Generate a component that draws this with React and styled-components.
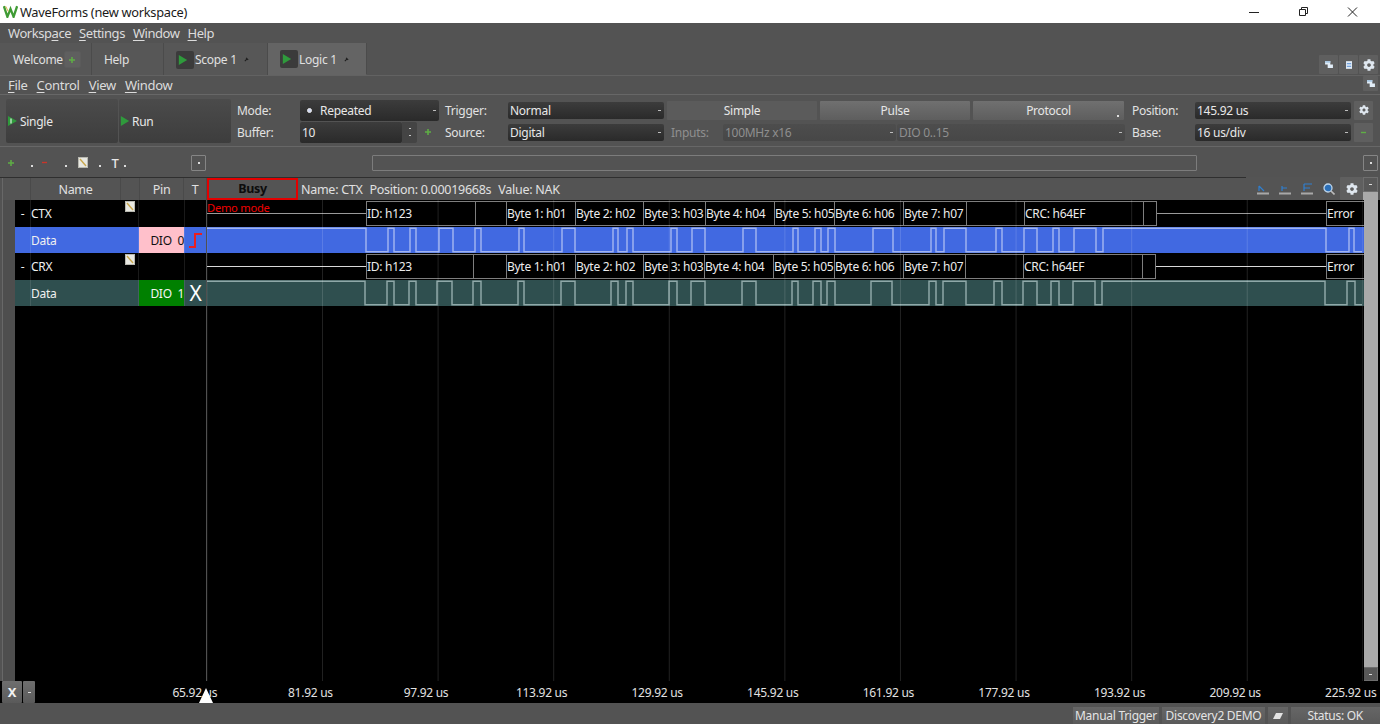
import React from 'react'
import styled, { createGlobalStyle } from 'styled-components'
import { FaCog } from 'react-icons/fa'

const GlobalStyle = createGlobalStyle`
  html, body { margin: 0; padding: 0; background: #535353; }
  * { box-sizing: border-box; }
  body { font-family: "Noto Sans", "Open Sans", sans-serif; }
`

const TRACE_X = 206
const ctxEdges = [366,388,394,410,416,439,453,475,481,519,524,562,575,613,618,627,633,671,677,692,705,743,756,793,798,815,821,828,835,873,893,931,936,944,966,996,1002,1024,1037,1053,1059,1074,1096,1103,1326,1349,1354]
const crxEdges = [365,387,394,409,416,437,452,473,481,518,524,561,575,611,618,626,633,669,677,691,705,742,756,792,798,813,821,827,835,871,892,929,936,943,966,994,1002,1023,1037,1051,1059,1073,1095,1102,1325,1347,1355]

const ctxBus = [[366,'ID: h123'],[475,''],[506,'Byte 1: h01'],[575,'Byte 2: h02'],[643,'Byte 3: h03'],[705,'Byte 4: h04'],[774,'Byte 5: h05'],[834,'Byte 6: h06'],[903,'Byte 7: h07'],[966,''],[1024,'CRC: h64EF'],[1143,''],[1157,null],[1326,'Error'],[1364,null]]
const crxBus = [[366,'ID: h123'],[473,''],[506,'Byte 1: h01'],[575,'Byte 2: h02'],[643,'Byte 3: h03'],[704,'Byte 4: h04'],[773,'Byte 5: h05'],[834,'Byte 6: h06'],[903,'Byte 7: h07'],[965,''],[1023,'CRC: h64EF'],[1142,''],[1156,null],[1326,'Error'],[1364,null]]

const axisLabels = ['65.92 us','81.92 us','97.92 us','113.92 us','129.92 us','145.92 us','161.92 us','177.92 us','193.92 us','209.92 us','225.92 us']

const Page = styled.div`
  width: 1380px;
  height: 724px;
  display: flex;
  flex-direction: column;
  overflow: hidden;
  background: #535353;
  color: #e4e4e4;
  font-size: 12px;
  letter-spacing: -.28px;
`

const TitleBar = styled.div`
  height: 23px;
  flex: none;
  background: #fff;
  color: #1a1a1a;
  display: flex;
  align-items: center;
  padding-left: 3px;
  font-size: 12.8px;
  svg.logo { margin-right: 2px; }
`
const WinButtons = styled.div`
  margin-left: auto;
  display: flex;
  svg { display: block; width: 49px; height: 12px; }
  padding-right: 3px;
`

const MenuBar = styled.div`
  height: ${p => p.$h}px;
  flex: none;
  display: flex;
  align-items: center;
  gap: ${p => p.$gap}px;
  padding-left: 8px;
  font-size: 13px;
  letter-spacing: ${p => p.$track}px;
  color: #dcdcdc;
  border-bottom: ${p => p.$line ? '1px solid #676767' : 'none'};
  position: relative;
  u { text-underline-offset: 2px; }
`

const TabBar = styled.div`
  height: 33px;
  flex: none;
  display: flex;
  border-bottom: 1px solid #626262;
`
const Tab = styled.div`
  width: ${p => p.$w}px;
  display: flex;
  align-items: center;
  padding-left: ${p => p.$pad}px;
  padding-top: 1px;
  gap: 1px;
  background: ${p => p.$active ? '#646464' : '#575757'};
  border-right: 1px solid #4b4b4b;
  font-size: 12px;
  color: #e0e0e0;
  border-bottom: ${p => p.$active ? '1px solid #646464' : 'none'};
`
const PlayBox = styled.span`
  width: 18px;
  height: 18px;
  background: #3b3b3b;
  border-radius: 2px;
  display: inline-flex;
  align-items: center;
  padding-left: 2px;
`
const PlusBox = styled.span`
  width: 17px;
  height: 17px;
  background: #5f5f5f;
  border: 1px solid #5b5b5b;
  border-radius: 2px;
  display: inline-flex;
  align-items: center;
  justify-content: center;
`
const PinMark = styled.svg`
  width: 5px;
  height: 5px;
  margin-left: 6px;
`
const TabTools = styled.div`
  margin-left: auto;
  align-self: flex-end;
  display: flex;
  gap: 1px;
  margin-right: 2px;
  margin-bottom: 1px;
`
const TinyBtn = styled.div`
  width: ${p => p.$w || 19}px;
  height: ${p => p.$h || 19}px;
  background: #5f5f5f;
  border-radius: 1px;
  display: flex;
  align-items: center;
  justify-content: center;
  color: #dfe7ef;
  flex: none;
`
const MenuCorner = styled(TinyBtn)`
  position: absolute;
  right: 2px;
  top: 0;
`

const ControlBar = styled.div`
  height: 52px;
  flex: none;
  display: flex;
  padding: 4px 0 0 6px;
  border-bottom: 1px solid #676767;
`
const RunButton = styled.div`
  width: 112px;
  height: 44px;
  margin-right: 1px;
  border-radius: 2px;
  background: linear-gradient(#4b4b4b, #3d3d3d);
  display: flex;
  align-items: center;
  gap: 2px;
  padding-left: 1px;
  font-size: 12px;
  color: #e8e8e8;
`
const Block = styled.div`
  width: ${p => p.$w}px;
  margin-left: ${p => p.$ml}px;
  flex: none;
  display: flex;
  flex-direction: column;
`
const FieldRow = styled.div`
  height: 22px;
  display: flex;
  align-items: center;
  gap: ${p => p.$gap || 0}px;
`
const Label = styled.div`
  width: ${p => p.$w || 63}px;
  flex: none;
  font-size: 12px;
  padding-left: ${p => p.$pad || 0}px;
  color: ${p => p.$off ? '#8f8f8f' : '#e2e2e2'};
`
const Field = styled.div`
  width: ${p => p.$w}px;
  height: ${p => p.$h || 17}px;
  flex: none;
  position: relative;
  display: flex;
  align-items: center;
  padding-left: ${p => p.$pad || 2}px;
  margin-left: ${p => p.$ml || 0}px;
  border-radius: 2px;
  font-size: 12px;
  white-space: nowrap;
  color: ${p => p.$off ? '#8f8f8f' : '#e8e8e8'};
  background: ${p => p.$off ? 'linear-gradient(#4d4d4d, #474747)' : 'linear-gradient(#3c3c3c, #2a2a2a)'};
  &::after {
    content: "";
    display: ${p => p.$plain ? 'none' : 'block'};
    position: absolute;
    right: 3px;
    top: 50%;
    width: 3px;
    height: 1px;
    background: #bdbdbd;
  }
`
const Dot = styled.span`
  width: 5px;
  height: 5px;
  border-radius: 50%;
  background: #cfd8f5;
  border: 1px solid #e8e8e8;
  margin: 0 8px 0 6px;
`
const Spin = styled.div`
  width: 15px;
  height: 21px;
  flex: none;
  background: #444;
  border-radius: 0 2px 2px 0;
  display: flex;
  flex-direction: column;
  align-items: center;
  justify-content: space-around;
  padding: 3px 0;
  i { display: block; width: 2px; height: 1px; background: #c8c8c8; }
`
const TrigTab = styled.div`
  width: ${p => p.$w}px;
  height: 19px;
  flex: none;
  display: flex;
  align-items: center;
  justify-content: center;
  font-size: 12px;
  position: relative;
  color: #e6e6e6;
  border-radius: 1px;
  background: ${p => p.$on ? 'linear-gradient(#707070, #5e5e5e)' : '#5b5b5b'};
`
const Caret = styled.span`
  position: absolute;
  right: 5px;
  bottom: 3px;
  width: 2px;
  height: 2px;
  background: #e0e0e0;
`
const SideBtn = styled(TinyBtn)`
  margin-left: 3px;
`

const ToolRow = styled.div`
  height: 30px;
  flex: none;
  display: flex;
  align-items: center;
  padding-top: 1px;
`
const Tool = styled.div`
  width: ${p => p.$w}px;
  margin-left: ${p => p.$ml}px;
  flex: none;
  display: flex;
  align-items: center;
  justify-content: center;
  font-size: 13px;
  font-weight: 500;
  color: #e8e8e8;
`
const TinyDot = styled.span`
  width: 2px;
  height: 2px;
  background: #ddd;
  margin-top: 6px;
`
const FrameBtn = styled.div`
  width: 15px;
  height: 16px;
  margin-left: ${p => p.$ml}px;
  flex: none;
  border: 1px solid #858585;
  border-radius: 1px;
  display: flex;
  align-items: center;
  justify-content: center;
  i { display: block; width: 2px; height: 2px; background: #ddd; }
`
const ScrollSlot = styled.div`
  width: 825px;
  height: 16px;
  margin-left: 166px;
  flex: none;
  border: 1px solid #7c7c7c;
  border-radius: 1px;
`

const Panel = styled.div`
  height: 504px;
  flex: none;
  display: flex;
  padding-left: 2px;
  position: relative;
  &::before {
    content: "";
    position: absolute;
    left: 0;
    top: 0;
    width: 1246px;
    height: 1px;
    background: #2f2f2f;
  }
`
const Table = styled.div`
  width: 1361px;
  flex: none;
  display: flex;
  flex-direction: column;
`
const HeaderRow = styled.div`
  height: 23px;
  flex: none;
  display: flex;
  align-items: center;
  background: #545454;
  font-size: 12.5px;
  color: #e0e0e0;
  border-left: 1px solid #686868;
`
const HeadCell = styled.div`
  width: ${p => p.$w}px;
  height: 100%;
  flex: none;
  display: flex;
  align-items: center;
  justify-content: center;
  padding-top: 1px;
  border-right: 1px solid #4a4a4a;
`
const BusyBox = styled.div`
  width: 91px;
  height: 22px;
  flex: none;
  border: 2px solid #e40000;
  display: flex;
  align-items: center;
  justify-content: center;
  color: #0c0c0c;
  font-weight: 700;
  font-size: 12.5px;
`
const Info = styled.div`
  margin-left: 3px;
  padding-top: 1px;
  display: flex;
  gap: 7px;
  white-space: nowrap;
`
const HeadTools = styled.div`
  margin-left: auto;
  display: flex;
  align-items: center;
  gap: 10px;
  height: 100%;
`
const GearBtn = styled(TinyBtn)`
  margin-left: -5px;
  width: 23px;
  height: 23px;
`

const Body = styled.div`
  flex: 1;
  display: flex;
  min-height: 0;
`
const Gutter = styled.div`
  width: 13px;
  flex: none;
  background: #4e4e4e;
  border-left: 1px solid #686868;
`
const Scope = styled.div`
  flex: 1;
  background: #000;
  position: relative;
`
const GridLines = styled.div`
  position: absolute;
  left: ${TRACE_X - 15}px;
  top: 0;
  bottom: 0;
  width: 1157px;
  pointer-events: none;
  border-left: 1px solid #505050;
  background-image: linear-gradient(to right, rgba(255,255,255,.13) 1px, transparent 1px);
  background-size: 115.6px 100%;
  background-position: 115px 0;
`
const Row = styled.div`
  height: ${p => p.$h}px;
  display: flex;
  background: ${p => p.$bg};
  color: #f0f0f0;
`
const NameCell = styled.div`
  width: 124px;
  flex: none;
  display: flex;
  align-items: center;
  position: relative;
  border-right: 1px solid rgba(255,255,255,.1);
  font-size: 12px;
`
const Dash = styled.span`
  width: 15px;
  flex: none;
  text-align: center;
`
const NameText = styled.span`
  flex: 1;
  height: 100%;
  display: flex;
  align-items: center;
  border-left: 1px solid rgba(255,255,255,.1);
`
const NoteIcon = styled.svg`
  position: absolute;
  left: 110px;
  top: 1px;
  width: 10px;
  height: 11px;
`
const PinCell = styled.div`
  width: 45px;
  flex: none;
  background: ${p => p.$bg || 'transparent'};
  color: ${p => p.$fg || '#fff'};
  display: flex;
  align-items: center;
  justify-content: flex-end;
  white-space: pre;
  font-size: 12px;
`
const TrigCell = styled.div`
  width: 22px;
  flex: none;
  display: flex;
  align-items: center;
  justify-content: center;
  font-size: 21px;
  color: #fff;
  border-left: 1px solid rgba(255,255,255,.1);
  svg { margin-left: 1px; }
`
const Trace = styled.div`
  flex: 1;
  min-width: 0;
  position: relative;
  overflow: hidden;
  padding-top: ${p => p.$top}px;
`
const BusLane = styled.div`
  height: 25px;
  display: flex;
`
const BusLine = styled.div`
  flex: none;
  position: relative;
  &::after {
    content: "";
    position: absolute;
    left: 0;
    right: 0;
    top: 12px;
    height: 1px;
    background: ${p => p.$c};
  }
`
const BusSeg = styled.div`
  flex: none;
  border: 1px solid #7e7e7e;
  border-right: none;
  display: flex;
  align-items: center;
  white-space: nowrap;
  overflow: hidden;
  font-size: 12px;
  color: #ececec;
  &:nth-last-child(3) { border-right: 1px solid #7e7e7e; }
`
const DemoMark = styled.div`
  position: absolute;
  left: 1px;
  top: 1px;
  color: #f00000;
  font-size: 11.2px;
  line-height: 13px;
  white-space: nowrap;
`
const WaveSvg = styled.svg`
  display: block;
  width: 1156px;
  height: 26px;
`

const ScrollCol = styled.div`
  width: 17px;
  flex: none;
  padding-right: 2px;
  display: flex;
  flex-direction: column;
  background: linear-gradient(#545454 0, #545454 23px, #000 23px);
`
const ScrollEnd = styled.div`
  height: ${p => p.$h}px;
  flex: none;
  background: #585858;
  border: 1px solid #6e6e6e;
  display: flex;
  align-items: center;
  justify-content: center;
  i { display: block; width: 3px; height: 1px; background: #ddd; }
`
const ScrollThumb = styled.div`
  flex: 1;
  background: #a9a9a9;
`

const Axis = styled.div`
  height: 22px;
  flex: none;
  background: #000;
  display: flex;
  position: relative;
`
const AxisBtns = styled.div`
  width: 137px;
  flex: none;
  display: flex;
  gap: 1px;
  padding-left: 2px;
`
const AxisBtn = styled.div`
  width: ${p => p.$w}px;
  height: 22px;
  background: linear-gradient(#6e6e6e, #5a5a5a);
  border-radius: 1px;
  display: flex;
  align-items: center;
  justify-content: center;
  color: #f2f2f2;
  font-weight: 700;
  font-size: 13px;
  i { display: block; width: 3px; height: 1px; background: #ddd; }
`
const AxisLabels = styled.div`
  display: grid;
  grid-template-columns: repeat(11, 115.6px);
  align-items: center;
  flex: none;
`
const AxisLabel = styled.div`
  text-align: center;
  font-size: 12px;
  color: #e2e2e2;
  white-space: nowrap;
`
const Marker = styled.div`
  position: absolute;
  left: 199px;
  bottom: 0;
  width: 0;
  height: 0;
  border-left: 7px solid transparent;
  border-right: 7px solid transparent;
  border-bottom: 15px solid #fff;
`

const StatusBar = styled.div`
  flex: 1;
  display: flex;
  justify-content: flex-end;
  align-items: flex-end;
  gap: 3px;
`
const StatusBtn = styled.div`
  width: ${p => p.$w}px;
  height: 17px;
  flex: none;
  background: linear-gradient(#666, #5a5a5a);
  display: flex;
  align-items: center;
  justify-content: ${p => p.$end ? 'flex-end' : 'center'};
  padding-right: ${p => p.$end ? 17 : 0}px;
  font-size: 12px;
  color: #e4e4e4;
  white-space: nowrap;
`

const Play = ({ w = 10, h = 12, c = '#2f9a3c' }) => (
  <svg width={w} height={h} viewBox="0 0 12 14"><path d="M1 1l10 6-10 6z" fill={c} /></svg>
)
const Plus = ({ c = '#5fae45' }) => (
  <svg width="6" height="6" viewBox="0 0 7 7"><path d="M3.5 0v7M0 3.5h7" stroke={c} strokeWidth="1.8" /></svg>
)
const Minus = ({ c = '#5fae45', w = 5 }) => (
  <svg width={w} height="3" viewBox={`0 0 ${w} 3`}><path d={`M0 1.5h${w}`} stroke={c} strokeWidth="1.4" /></svg>
)
const Pin = () => (
  <PinMark viewBox="0 0 6 6"><path d="M1 5l3-3M2.5 1l2.5 2.5" stroke="#1c1c1c" strokeWidth="1.3" /></PinMark>
)
const WinTile = () => (
  <svg width="8" height="7" viewBox="0 0 9 8"><path d="M0 0h6v4h3v4H3V4H0z" fill="#e2edf7" /><path d="M0 0h6v2H0z" fill="#a9c7e2" /></svg>
)
const Note = () => (
  <>
    <rect x=".5" y=".5" width="9" height="10" fill="#e8e8e2" stroke="#b8b8b0" />
    <path d="M2 2l6 7" stroke="#c9a84e" strokeWidth="1.4" />
  </>
)
const AlignIcon = ({ d }) => (
  <svg width="12" height="13" viewBox="0 0 12 13">
    <path d={d} stroke="#2f7fd0" strokeWidth="1.2" fill="none" />
    <path d="M0 11.5h12" stroke="#a8a8a8" strokeWidth="2" />
  </svg>
)

const wavePath = (edges, startHigh = true) => {
  const top = 1.2
  const bottom = 24.8
  let high = startHigh
  let d = `M0 ${top}`
  edges.forEach(x => {
    const px = x - TRACE_X
    d += ` H${px} V${high ? bottom : top}`
    high = !high
  })
  d += ` H1156`
  return d
}

const Bus = ({ items, line }) => {
  const parts = [{ x: TRACE_X, text: null }, ...items.map(([x, text]) => ({ x, text }))]
  return (
    <BusLane>
      {parts.slice(0, -1).map((s, i) => {
        const width = parts[i + 1].x - s.x
        if (s.text === null) return <BusLine key={i} $c={line} style={{ width }} />
        return <BusSeg key={i} style={{ width }}>{s.text}</BusSeg>
      })}
    </BusLane>
  )
}

const GroupRow = ({ name, items, line, demo }) => (
  <Row $h={27} $bg="#000">
    <NameCell>
      <Dash>-</Dash>
      <NameText>{name}</NameText>
      <NoteIcon viewBox="0 0 10 11"><Note /></NoteIcon>
    </NameCell>
    <PinCell />
    <TrigCell />
    <Trace $top={1}>
      <Bus items={items} line={line} />
      {demo && <DemoMark>Demo mode</DemoMark>}
    </Trace>
  </Row>
)

const DataRow = ({ bg, pinBg, pinFg, pin, edges, stroke, trig }) => (
  <Row $h={26} $bg={bg}>
    <NameCell>
      <Dash />
      <NameText>Data</NameText>
    </NameCell>
    <PinCell $bg={pinBg} $fg={pinFg}>{pin}</PinCell>
    <TrigCell>{trig}</TrigCell>
    <Trace $top={0}>
      <WaveSvg viewBox="0 0 1156 26">
        <path d={wavePath(edges)} fill="none" stroke={stroke} strokeWidth="1.5" />
      </WaveSvg>
    </Trace>
  </Row>
)

export default function App() {
  return (
    <>
      <GlobalStyle />
      <Page>
        <TitleBar>
          <svg className="logo" width="15" height="13" viewBox="0 0 17 14">
            <path d="M1 1l4 12 3.5-9 3.5 9 4-12" fill="none" stroke="#3f9b35" strokeWidth="2.6" />
            <path d="M3 1l3 6" stroke="#d4a92e" strokeWidth="1" />
          </svg>
          WaveForms (new workspace)
          <WinButtons>
            <svg viewBox="0 0 49 12"><path d="M19 6.5h10" stroke="#222" /></svg>
            <svg viewBox="0 0 49 12"><path d="M20.5 3.5h6v6h-6zM22.5 3.5v-2h6v6h-2" fill="none" stroke="#222" /></svg>
            <svg viewBox="0 0 49 12"><path d="M20 1.5l9 9M29 1.5l-9 9" stroke="#222" /></svg>
          </WinButtons>
        </TitleBar>

        <MenuBar $h={20} $gap={8} $track={-0.45}>
          <span>Worksp<u>a</u>ce</span>
          <span><u>S</u>ettings</span>
          <span><u>W</u>indow</span>
          <span><u>H</u>elp</span>
        </MenuBar>

        <TabBar>
          <Tab $w={92} $pad={13}>Welcome<PlusBox><Plus /></PlusBox></Tab>
          <Tab $w={72} $pad={12}>Help</Tab>
          <Tab $w={104} $pad={12}><PlayBox><Play /></PlayBox>Scope 1<Pin /></Tab>
          <Tab $w={99} $pad={12} $active><PlayBox><Play /></PlayBox>Logic 1<Pin /></Tab>
          <TabTools>
            <TinyBtn><WinTile /></TinyBtn>
            <TinyBtn><svg width="6" height="8" viewBox="0 0 7 9"><path d="M0 0h7v9H0z" fill="#dfeaf5" /><path d="M1 3h5M1 6h5" stroke="#3f7fd0" /></svg></TinyBtn>
            <TinyBtn><FaCog size={12} /></TinyBtn>
          </TabTools>
        </TabBar>

        <MenuBar $h={19} $gap={9} $track={-0.3} $line>
          <span><u>F</u>ile</span>
          <span><u>C</u>ontrol</span>
          <span><u>V</u>iew</span>
          <span><u>W</u>indow</span>
          <MenuCorner $w={15} $h={15}><WinTile /></MenuCorner>
        </MenuBar>

        <ControlBar>
          <RunButton>
            <svg width="11" height="12" viewBox="0 0 11 12">
              <path d="M1 1l9 5-9 5z" fill="#2f9a3c" />
              <path d="M4 3.5v5" stroke="#fff" />
            </svg>
            Single
          </RunButton>
          <RunButton><Play />Run</RunButton>
          <Block $w={202} $ml={5}>
            <FieldRow>
              <Label>Mode:</Label>
              <Field $w={139} $h={21} $pad={1}><Dot />Repeated</Field>
            </FieldRow>
            <FieldRow>
              <Label>Buffer:</Label>
              <Field $w={102} $h={21} $plain>10</Field>
              <Spin><i /><i /></Spin>
              <Tool $w={7} $ml={7}><Plus /></Tool>
            </FieldRow>
          </Block>
          <Block $w={219} $ml={6}>
            <FieldRow>
              <Label>Trigger:</Label>
              <Field $w={156}>Normal</Field>
            </FieldRow>
            <FieldRow>
              <Label>Source:</Label>
              <Field $w={156}>Digital</Field>
            </FieldRow>
          </Block>
          <Block $w={458} $ml={3}>
            <FieldRow $gap={3}>
              <TrigTab $w={150}>Simple</TrigTab>
              <TrigTab $w={150} $on>Pulse</TrigTab>
              <TrigTab $w={151} $on>Protocol<Caret /></TrigTab>
            </FieldRow>
            <FieldRow>
              <Label $w={56} $pad={4} $off>Inputs:</Label>
              <Field $w={173} $off>100MHz x16</Field>
              <Field $w={228} $ml={1} $off>DIO 0..15</Field>
            </FieldRow>
          </Block>
          <Block $w={242} $ml={7}>
            <FieldRow>
              <Label>Position:</Label>
              <Field $w={156}>145.92 us</Field>
              <SideBtn><FaCog size={10} /></SideBtn>
            </FieldRow>
            <FieldRow>
              <Label>Base:</Label>
              <Field $w={156}>16 us/div</Field>
              <SideBtn><Minus /></SideBtn>
            </FieldRow>
          </Block>
        </ControlBar>

        <ToolRow>
          <Tool $w={11} $ml={5}><Plus /></Tool>
          <Tool $w={4} $ml={14}><TinyDot /></Tool>
          <Tool $w={7} $ml={7}><Minus c="#c8352a" /></Tool>
          <Tool $w={4} $ml={16}><TinyDot /></Tool>
          <Tool $w={11} $ml={9}><svg width="10" height="11" viewBox="0 0 10 11"><Note /></svg></Tool>
          <Tool $w={4} $ml={10}><TinyDot /></Tool>
          <Tool $w={8} $ml={9}>T</Tool>
          <Tool $w={4} $ml={4}><TinyDot /></Tool>
          <FrameBtn $ml={64}><i /></FrameBtn>
          <ScrollSlot />
          <FrameBtn $ml={166}><i /></FrameBtn>
        </ToolRow>

        <Panel>
          <Table>
            <HeaderRow>
              <HeadCell $w={28} />
              <HeadCell $w={90}>Name</HeadCell>
              <HeadCell $w={19} />
              <HeadCell $w={44}>Pin</HeadCell>
              <HeadCell $w={23}>T</HeadCell>
              <BusyBox>Busy</BusyBox>
              <Info>
                <span>Name: CTX</span>
                <span>Position: 0.00019668s</span>
                <span>Value: NAK</span>
              </Info>
              <HeadTools>
                <AlignIcon d="M2 9V4M2 4l5 5" />
                <AlignIcon d="M3 9V4M3 6h5" />
                <AlignIcon d="M3 9V2M3 2h8M3 6h6" />
                <svg width="12" height="12" viewBox="0 0 12 12">
                  <circle cx="5" cy="5" r="4" fill="#2b6fb8" stroke="#bcd4ea" strokeWidth="1.3" />
                  <path d="M8 8l3.5 3.5" stroke="#bbb" strokeWidth="1.6" />
                </svg>
                <GearBtn><FaCog size={12} /></GearBtn>
              </HeadTools>
            </HeaderRow>
            <Body>
              <Gutter />
              <Scope>
                <GroupRow name="CTX" items={ctxBus} line="#9a9a9a" demo />
                <DataRow
                  bg="#4169e1"
                  pinBg="#ffc0cb"
                  pinFg="#111"
                  pin="DIO  0"
                  edges={ctxEdges}
                  stroke="#9fb3f0"
                  trig={
                    <svg width="16" height="17" viewBox="0 0 16 17">
                      <path d="M1 15h6V2h7" fill="none" stroke="#ea1f1f" strokeWidth="2" />
                    </svg>
                  }
                />
                <GroupRow name="CRX" items={crxBus} line="#d8d8d8" />
                <DataRow
                  bg="#2f4f4f"
                  pinBg="#008000"
                  pinFg="#f4f4f4"
                  pin="DIO  1"
                  edges={crxEdges}
                  stroke="#8fa8a8"
                  trig="X"
                />
                <GridLines />
              </Scope>
            </Body>
          </Table>
          <ScrollCol>
            <ScrollEnd $h={15}><i /></ScrollEnd>
            <ScrollThumb />
            <ScrollEnd $h={14}><i /></ScrollEnd>
          </ScrollCol>
        </Panel>

        <Axis>
          <AxisBtns>
            <AxisBtn $w={20}>X</AxisBtn>
            <AxisBtn $w={12}><i /></AxisBtn>
          </AxisBtns>
          <AxisLabels>
            {axisLabels.map(l => <AxisLabel key={l}>{l}</AxisLabel>)}
          </AxisLabels>
          <Marker />
        </Axis>

        <StatusBar>
          <StatusBtn $w={86}>Manual Trigger</StatusBtn>
          <StatusBtn $w={103}>Discovery2 DEMO</StatusBtn>
          <StatusBtn $w={20}>
            <svg width="10" height="6" viewBox="0 0 10 6"><path d="M3 0h7L7 6H0z" fill="#e2e2e2" /></svg>
          </StatusBtn>
          <StatusBtn $w={89} $end>Status: OK</StatusBtn>
        </StatusBar>
      </Page>
    </>
  )
}
